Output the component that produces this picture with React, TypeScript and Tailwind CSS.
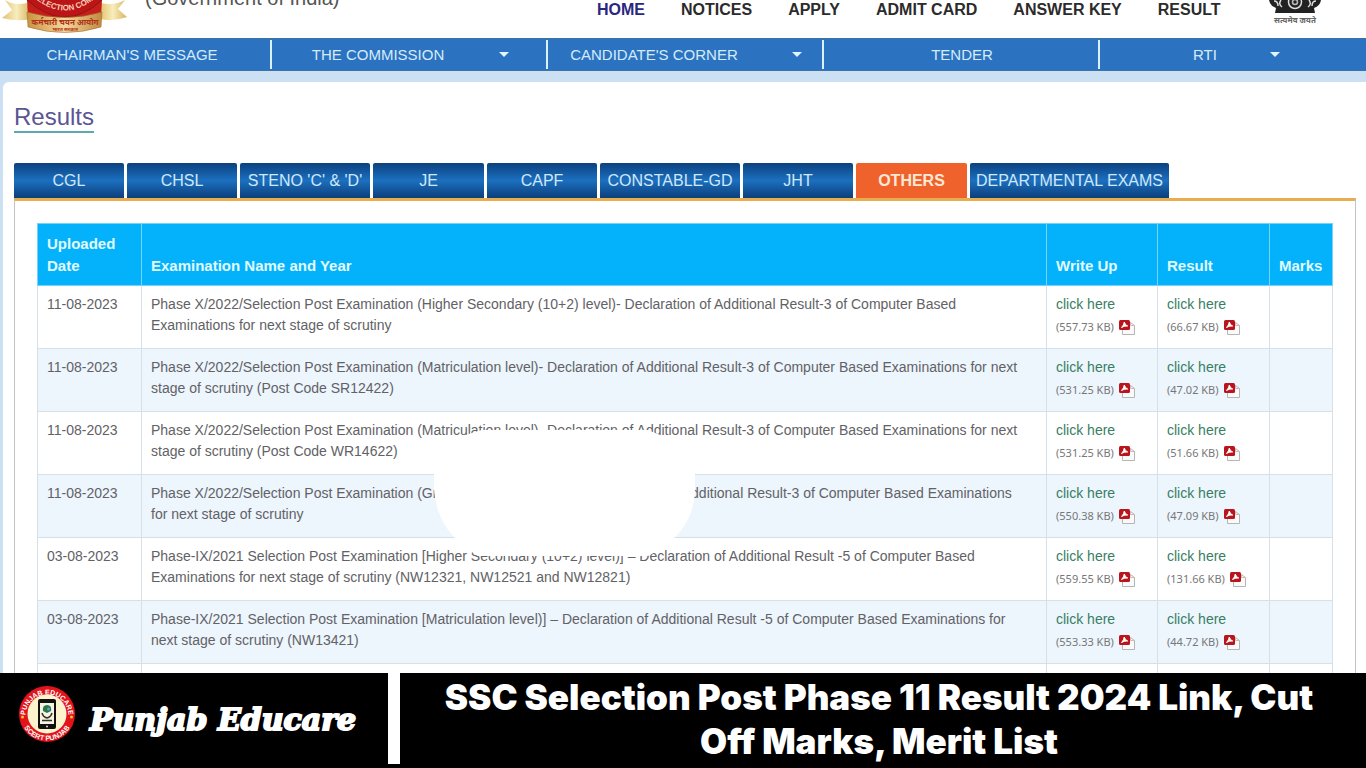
import React from "react";

const mainLinks = ["NOTICES", "APPLY", "ADMIT CARD", "ANSWER KEY", "RESULT"];

const sections = [
  { label: "CHAIRMAN'S MESSAGE", pad: "pr-2", arrow: "" },
  { label: "THE COMMISSION", pad: "pr-16", arrow: "right-[39px]" },
  { label: "CANDIDATE'S CORNER", pad: "pr-16", arrow: "right-[22px]" },
  { label: "TENDER", pad: "", arrow: "" },
  { label: "RTI", pad: "pr-14", arrow: "right-[86px]" },
];

const tabs = [
  { label: "CGL", width: "w-[110px]" },
  { label: "CHSL", width: "w-[110px]" },
  { label: "STENO 'C' & 'D'", width: "w-[130px]" },
  { label: "JE", width: "w-[111px]" },
  { label: "CAPF", width: "w-[110px]" },
  { label: "CONSTABLE-GD", width: "w-[140px]" },
  { label: "JHT", width: "w-[110px]" },
  { label: "OTHERS", width: "w-[111px]" },
  { label: "DEPARTMENTAL EXAMS", width: "w-[199px]" },
];

const rows = [
  {
    date: "11-08-2023",
    name: ["Phase X/2022/Selection Post Examination (Higher Secondary (10+2) level)- Declaration of Additional Result-3 of Computer Based", "Examinations for next stage of scrutiny"],
    writeUp: "557.73",
    result: "66.67",
  },
  {
    date: "11-08-2023",
    name: ["Phase X/2022/Selection Post Examination (Matriculation level)- Declaration of Additional Result-3 of Computer Based Examinations for next", "stage of scrutiny (Post Code SR12422)"],
    writeUp: "531.25",
    result: "47.02",
  },
  {
    date: "11-08-2023",
    name: ["Phase X/2022/Selection Post Examination (Matriculation level)- Declaration of Additional Result-3 of Computer Based Examinations for next", "stage of scrutiny (Post Code WR14622)"],
    writeUp: "531.25",
    result: "51.66",
  },
  {
    date: "11-08-2023",
    name: ["Phase X/2022/Selection Post Examination (Graduation & above level)- Declaration of Additional Result-3 of Computer Based Examinations", "for next stage of scrutiny"],
    writeUp: "550.38",
    result: "47.09",
  },
  {
    date: "03-08-2023",
    name: ["Phase-IX/2021 Selection Post Examination [Higher Secondary (10+2) level)] – Declaration of Additional Result -5 of Computer Based", "Examinations for next stage of scrutiny (NW12321, NW12521 and NW12821)"],
    writeUp: "559.55",
    result: "131.66",
  },
  {
    date: "03-08-2023",
    name: ["Phase-IX/2021 Selection Post Examination [Matriculation level)] – Declaration of Additional Result -5 of Computer Based Examinations for", "next stage of scrutiny (NW13421)"],
    writeUp: "553.33",
    result: "44.72",
  },
];

function CommissionEmblem() {
  return (
    <svg viewBox="0 0 132 38" className="h-[38px] w-[132px] shrink-0" aria-hidden="true">
      <defs>
        <linearGradient id="gold" x1="0" x2="1">
          <stop offset="0" stopColor="#c9933f" />
          <stop offset="0.5" stopColor="#f4d79a" />
          <stop offset="1" stopColor="#c08a3e" />
        </linearGradient>
        <linearGradient id="tail" x1="0" x2="1">
          <stop offset="0" stopColor="#e0c06e" />
          <stop offset="0.5" stopColor="#f8edbd" />
          <stop offset="1" stopColor="#d9b25c" />
        </linearGradient>
        <path id="ring" d="M32 -4 Q65 25 98 -4" />
      </defs>
      <path d="M5 0 Q14 6 27 3 L31 19 Q18 22 2 18 L12 10 Z" fill="url(#tail)" />
      <path d="M101 3 Q114 6 125 0 L118 9 L127 17 Q113 22 99 19 Z" fill="url(#tail)" />
      <path d="M27 0 H102 L101 18 H28 Z" fill="#c51f1b" />
      <path d="M27 0 Q65 34 102 0" fill="#bb1518" stroke="#8e1513" />
      <path d="M27 12 Q65 23 102 12 L101 27 Q65 38 28 27 Z" fill="url(#gold)" stroke="#a36e30" strokeWidth="0.6" />
      <text fontSize="8" fontWeight="700" fill="#f7cdb5" fontFamily="Liberation Sans">
        <textPath href="#ring" startOffset="50%" textAnchor="middle">ELECTION COM</textPath>
      </text>
      <text x="65" y="25" textAnchor="middle" fontSize="8" fontWeight="700" fill="#b0311c" fontFamily="Noto Sans, sans-serif">कर्मचारी चयन आयोग</text>
      <text x="65" y="31" textAnchor="middle" fontSize="5" fontWeight="700" fill="#b0311c" fontFamily="Noto Sans, sans-serif">भारत सरकार</text>
    </svg>
  );
}

function StateEmblem() {
  return (
    <svg viewBox="0 0 56 26" className="h-[26px] w-14 shrink-0" aria-hidden="true">
      <path d="M2 0 Q3 6 9 8 L8 13 H48 L47 8 Q53 6 54 0 Z" fill="#222" />
      <circle cx="28" cy="2" r="6.5" fill="#222" stroke="#ddd" strokeWidth="1.5" />
      <circle cx="28" cy="2" r="2.5" fill="none" stroke="#bbb" strokeWidth="1.5" />
      <path d="M7 1 q4 0 4 5 M14 0 q-3 4 1 7 M42 0 q3 4 -1 7 M49 1 q-4 0 -4 5" fill="none" stroke="#ddd" strokeWidth="1.5" />
      <text x="28" y="23" textAnchor="middle" fontSize="8" fontWeight="700" fill="#666" fontFamily="Noto Sans, sans-serif">सत्यमेव जयते</text>
    </svg>
  );
}

function PdfIcon() {
  return (
    <svg viewBox="0 0 17 17" className="h-[17px] w-[17px] shrink-0" aria-hidden="true">
      <path d="M3.5 3.5 H11.5 L15.5 6.5 V15.5 H3.5 Z" fill="#fafafa" stroke="#b5b5b5" />
      <path d="M11.5 3 V6.5 H15.5" fill="none" stroke="#d5b5b5" />
      <rect x="0" y="1" width="11" height="10" rx="1.5" fill="#b9151c" />
      <path d="M2.5 8.5 Q5 6 5.3 3 Q6 6 8.7 7 Q5.5 6.5 2.5 8.5" fill="#fff" stroke="#fff" strokeWidth="1" />
    </svg>
  );
}

function EducareLogo() {
  return (
    <svg viewBox="0 0 58 58" className="h-[58px] w-[58px] shrink-0" aria-hidden="true">
      <defs>
        <path id="top" d="M7.5 31 A21.5 21.5 0 1 1 50.5 31" />
        <path id="bottom" d="M2.5 29 A26.5 26.5 0 0 0 55.5 29" />
      </defs>
      <circle cx="29" cy="29" r="28" fill="#e3131b" />
      <circle cx="29" cy="29" r="19.5" fill="#fdf3cd" />
      <g fill="#fff" fontSize="7" fontWeight="700" fontFamily="Liberation Sans">
        <text><textPath href="#top" startOffset="50%" textAnchor="middle">PUNJAB EDUCARE</textPath></text>
        <text><textPath href="#bottom" startOffset="50%" textAnchor="middle">SCERT PUNJAB</textPath></text>
      </g>
      <circle cx="4.5" cy="32" r="1.5" fill="#f6c52c" />
      <circle cx="53.5" cy="32" r="1.5" fill="#f6c52c" />
      <rect x="20" y="14" width="18" height="30" rx="2" fill="#111" />
      <rect x="22" y="18" width="14" height="21" fill="#f7f4df" />
      <path d="M25 26 Q24 20 29 20 Q34 20 33 26 L29 28 Z" fill="#287a4d" />
      <circle cx="30.500" cy="24" r="1.5" fill="#5b9fd0" />
      <path d="M24 28 Q25 32 29 33 Q33 32 34 28 M24 35.5 H34" fill="none" stroke="#333" strokeWidth="1.500" />
      <circle cx="29" cy="41.5" r="1" fill="#ddd" />
    </svg>
  );
}

function FileLink({ size }: { size: string }) {
  return (
    <td className="border border-[#d5e0e8] px-[9px] pt-2 align-top">
      <a href="#" className="block leading-[21px] text-[#397e63]">click here</a>
      <span className="flex h-6 items-center gap-[5px] whitespace-nowrap font-['Noto_Sans',sans-serif] text-[11px] text-[#777]">
        ({size} KB)<PdfIcon />
      </span>
    </td>
  );
}

export default function App() {
  return (
    <div className="flex h-screen flex-col overflow-hidden bg-[#cbe1f3] font-['Liberation_Sans',Arial,sans-serif] text-sm text-[#626266]">
      <header className="flex h-[38px] shrink-0 items-start overflow-hidden bg-white">
        <CommissionEmblem />
        <p className="-mt-[14px] ml-[13px] w-[452px] text-xl leading-6 text-[#555]">(Government of India)</p>
        <nav className="flex gap-9 whitespace-nowrap text-base font-bold leading-5 text-[#2b2b2b]">
          <a href="#" className="text-[#29277f]">HOME</a>
          {mainLinks.map((label) => <a key={label} href="#">{label}</a>)}
        </nav>
        <div className="ml-[46px]"><StateEmblem /></div>
      </header>

      <nav className="grid h-[33px] shrink-0 grid-cols-[272px_276px_276px_276px_1fr] border-y border-[#3d72a9] bg-[#2b73c0] text-[15px] text-[#d5ebfa]">
        {sections.map((section, index) => (
          <a key={section.label} href="#" className={`relative flex items-center justify-center whitespace-nowrap ${section.pad}`}>
            {section.label}
            {section.arrow && <span className={`absolute h-0 w-0 border-x-[5px] border-t-[5px] border-x-transparent border-t-[#e2f4ff] ${section.arrow}`} />}
            {index < 4 && <span className="absolute inset-y-px right-0 w-[2px] bg-[#d8f1fc]" />}
          </a>
        ))}
      </nav>

      <main className="ml-[3px] mt-[11px] min-h-0 flex-1 overflow-hidden rounded-tl-md bg-white pl-[11px] pr-[10px] pt-[21px]">
        <h1 className="w-fit border-b-2 border-[#5caaae] text-2xl leading-7 text-[#5a5593]">Results</h1>
        <div className="mt-[30px] flex gap-[3px]" role="tablist">
          {tabs.map((tab) => (
            <button
              key={tab.label}
              role="tab"
              aria-selected={tab.label === "OTHERS"}
              className={`${tab.width} h-[35px] shrink-0 whitespace-nowrap rounded-t-[2px] text-base ${tab.label === "OTHERS" ? "bg-[#f0622b] font-bold text-[#ffe9d5]" : "bg-linear-to-b from-[#0c417f] via-[#1c70c0] to-[#0c3f7a] text-[#cfe8fa]"}`}
            >
              {tab.label}
            </button>
          ))}
        </div>
        <section className="relative border-x border-t-[3px] border-x-[#c4c4c8] border-t-[#e7ae50] pb-10 pl-[22px] pr-[22px] pt-[22px]">
          <table className="w-full table-fixed border-collapse">
            <colgroup>
              <col className="w-[104px]" />
              <col />
              <col className="w-[111px]" />
              <col className="w-[112px]" />
              <col className="w-[63px]" />
            </colgroup>
            <thead>
              <tr className="h-[62px] bg-[#04b2fc] text-left align-bottom text-[15px] leading-[22px] text-[#e0faff]">
                {["Uploaded Date", "Examination Name and Year", "Write Up", "Result", "Marks"].map((title) => (
                  <th key={title} className="border border-[#75d3f8] px-[9px] pb-2 font-bold">{title}</th>
                ))}
              </tr>
            </thead>
            <tbody>
              {rows.map((row, index) => (
                <tr key={index} className="h-[63px] odd:bg-white even:bg-[#edf5fd]">
                  <td className="border border-[#d5e0e8] px-[9px] pt-2 align-top leading-[21px]">{row.date}</td>
                  <td className="whitespace-nowrap border border-[#d5e0e8] px-[9px] pt-2 align-top leading-[21px]">
                    {row.name[0]}<br />{row.name[1]}
                  </td>
                  <FileLink size={row.writeUp} />
                  <FileLink size={row.result} />
                  <td className="border border-[#d5e0e8]" />
                </tr>
              ))}
              <tr className="h-[63px]">
                {[0, 1, 2, 3, 4].map((cell) => <td key={cell} className="border border-[#d5e0e8]" />)}
              </tr>
            </tbody>
          </table>
          <svg viewBox="0 0 262 126" className="absolute left-[419px] top-[229px] h-[126px] w-[262px]" aria-hidden="true">
            <path d="M48 0 H214 Q242 10 261 30 V58 Q261 103 214 126 H44 Q0 100 0 55 V28 Q18 7 48 0 Z" fill="#fff" />
          </svg>
        </section>
      </main>

      <footer className="flex h-[95px] shrink-0 bg-black text-white">
        <div className="flex w-[388px] shrink-0 items-start pl-[18px] pt-3">
          <EducareLogo />
          <strong className="ml-[14px] mt-[15px] whitespace-nowrap font-['DejaVu_Serif',serif] text-[30px] font-bold italic leading-10 [-webkit-text-stroke:2px_white]">Punjab Educare</strong>
        </div>
        <span className="h-[91px] w-3 shrink-0 bg-white" />
        <h2 className="flex-1 pl-3 pr-5 pt-[2px] text-center font-['Inter',sans-serif] text-[35px] font-black leading-[44px]">
          SSC Selection Post Phase 11 Result 2024 Link, Cut<br />Off Marks, Merit List
        </h2>
      </footer>
    </div>
  );
}
